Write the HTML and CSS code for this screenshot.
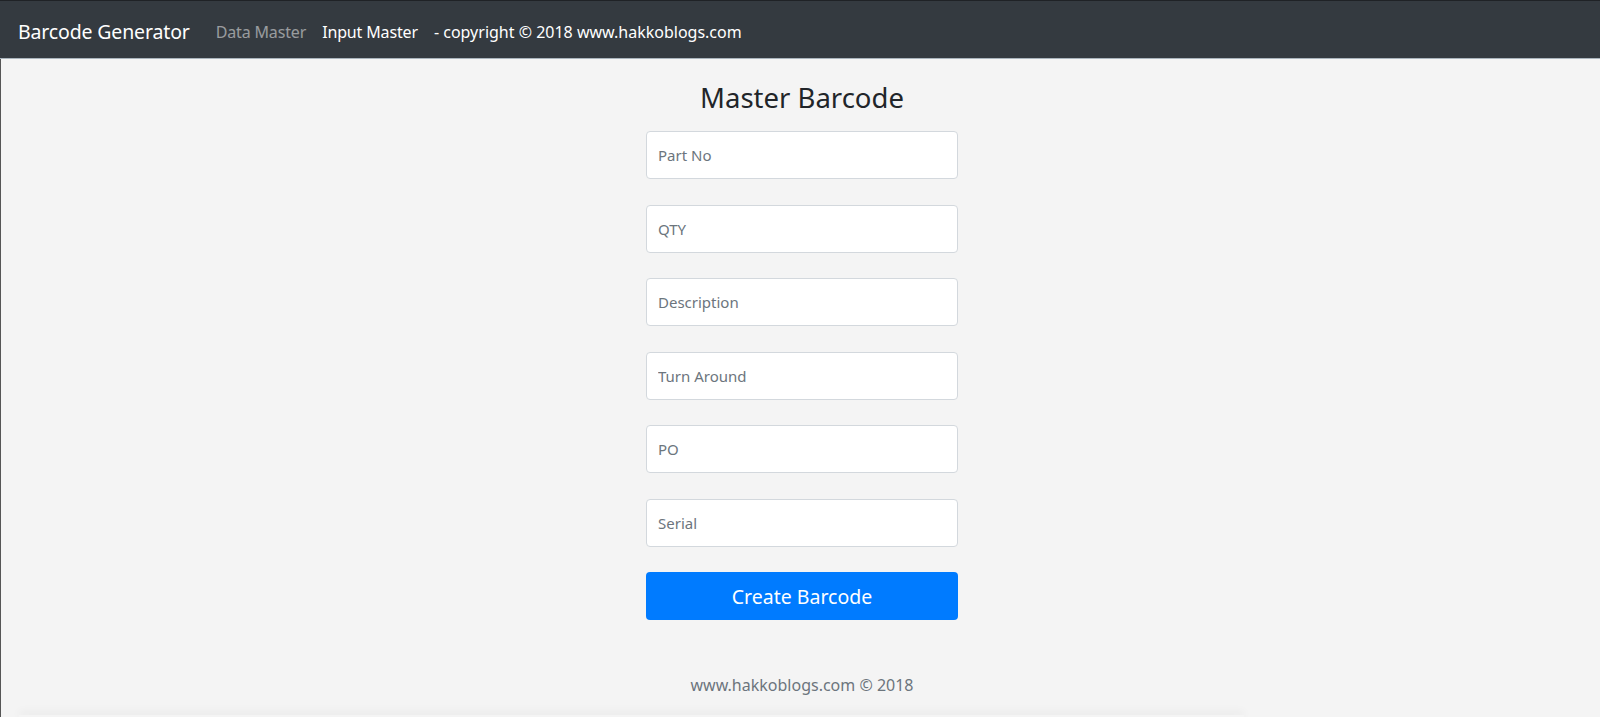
FILE: index.html
```html
<!DOCTYPE html>
<html lang="en">
<head>
  <meta charset="UTF-8">
  <meta name="viewport" content="width=device-width, initial-scale=1.0">
  <title>Barcode Generator</title>
  <link rel="stylesheet" href="styles.css">
</head>
<body>
  <!-- Navbar -->
  <nav class="navbar">
    <a class="brand" href="#">Barcode Generator</a>
    <a class="nav-link muted" href="#">Data Master</a>
    <a class="nav-link" href="#">Input Master</a>
    <span class="nav-link copy">- copyright © 2018 www.hakkoblogs.com</span>
  </nav>

  <!-- Form -->
  <main class="page">
    <h1>Master Barcode</h1>
    <form class="barcode-form">
      <input type="text" placeholder="Part No">
      <input type="text" placeholder="QTY">
      <input type="text" placeholder="Description">
      <input type="text" placeholder="Turn Around">
      <input type="text" placeholder="PO">
      <input type="text" placeholder="Serial">
      <button type="button" class="btn-primary">Create Barcode</button>
    </form>
    <footer class="footer">www.hakkoblogs.com © 2018</footer>
    <div class="bottom-card"></div>
  </main>
</body>
</html>
```

FILE: styles.css
```css
body {
  margin: 0;
  padding: 0;
  background-color: #f4f4f4;
  color: #212529;
  font-family: 'Noto Sans', 'Open Sans', sans-serif;
  overflow: hidden;
  height: 717px;
}

/* Navbar */
.navbar {
  display: flex;
  align-items: center;
  box-sizing: border-box;
  height: 59px;
  background: #343a40;
  border-top: 1px solid #1f2226;
  border-bottom: 1px solid #aab4bd;
  padding: 4px 18px 0;
}
.navbar a,
.navbar span {
  text-decoration: none;
  color: #fff;
}
.brand {
  font-size: 19.5px;
  margin-right: 26px;
  letter-spacing: -0.15px;
}
.nav-link {
  font-size: 16px;
  margin-right: 16px;
  letter-spacing: -0.15px;
}
.nav-link.copy {
  letter-spacing: 0;
}
.nav-link.muted {
  color: rgba(255, 255, 255, 0.5) !important;
}

/* Page */
.page {
  box-sizing: border-box;
  height: 658px;
  padding-left: 3px;
  border-left: 1px solid #555;
  display: flex;
  flex-direction: column;
  align-items: center;
}
h1 {
  font-weight: 400;
  font-size: 27.5px;
  line-height: 34px;
  margin: 22px 0 16px;
  color: #212529;
}
.barcode-form {
  width: 312px;
  display: flex;
  flex-direction: column;
  gap: 25.5px;
}
.barcode-form input {
  box-sizing: border-box;
  height: 48px;
  padding: 0 11px;
  border: 1px solid #d3d8dd;
  border-radius: 4px;
  background: #fff;
  font-family: inherit;
  font-size: 15px;
  color: #495057;
}
.barcode-form input::placeholder {
  color: #6c757d;
}
.btn-primary {
  height: 48px;
  border: none;
  border-radius: 4px;
  background: #007bff;
  color: #fff;
  font-family: inherit;
  font-size: 19.5px;
  cursor: pointer;
}
.footer {
  margin-top: 53px;
  line-height: 24px;
  font-size: 16px;
  color: #6c757d;
}
.bottom-card {
  align-self: flex-start;
  margin: 18px 0 0 15px;
  width: 1225px;
  height: 30px;
  background: #f4f4f4;
  box-shadow: 0 -2px 8px rgba(0, 0, 0, 0.13);
}
```
